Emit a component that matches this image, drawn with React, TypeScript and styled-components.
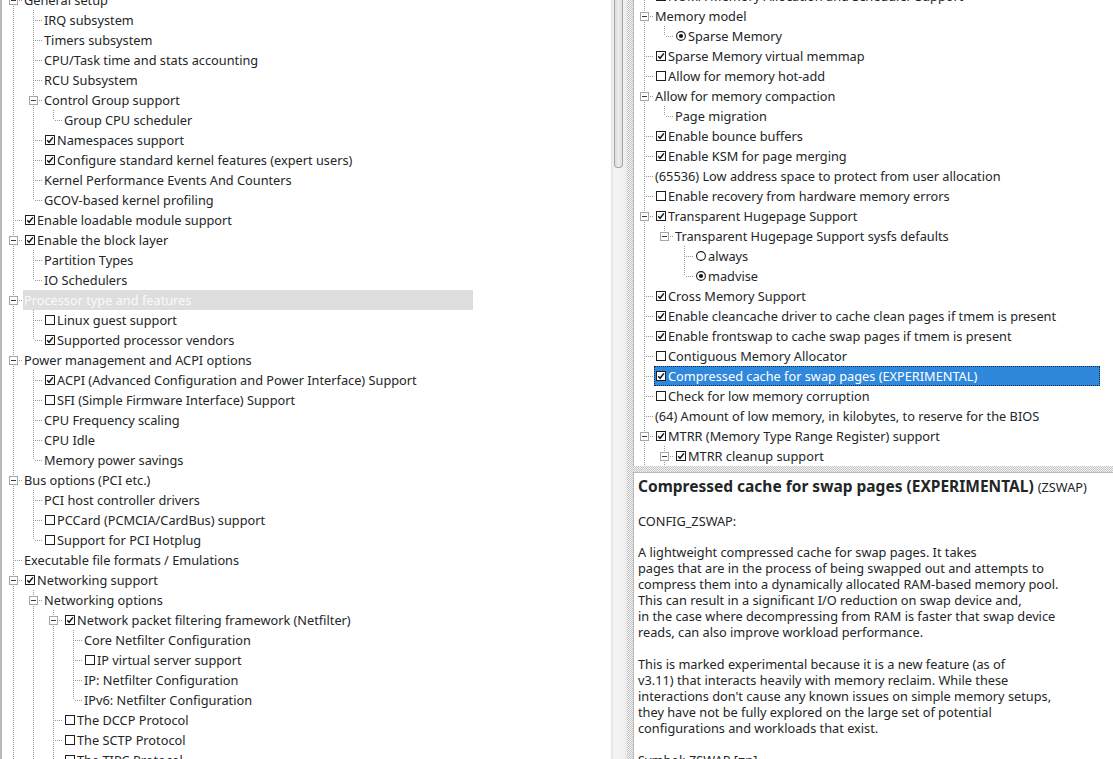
import React from "react";
import styled, { createGlobalStyle, css } from "styled-components";

const GlobalStyle = createGlobalStyle`
  html, body { margin: 0; padding: 0; background: #ffffff; overflow: hidden; }
  body {
    font-family: "Noto Sans", "Open Sans", "DejaVu Sans", sans-serif;
    font-size: 12.75px;
    color: #232627;
  }
`;

type Kind = "menu" | "check" | "radio" | "value";
interface Item {
  d: number;
  kind: Kind;
  text: string;
  on?: boolean;
  open?: boolean;
  sel?: "active" | "inactive";
}

const it = (d: number, kind: Kind, text: string, extra: Partial<Item> = {}): Item => ({ d, kind, text, ...extra });

const leftItems: Item[] = [
  it(0, "menu", "General setup", { open: true }),
  it(1, "menu", "IRQ subsystem"),
  it(1, "menu", "Timers subsystem"),
  it(1, "menu", "CPU/Task time and stats accounting"),
  it(1, "menu", "RCU Subsystem"),
  it(1, "menu", "Control Group support", { open: true }),
  it(2, "menu", "Group CPU scheduler"),
  it(1, "check", "Namespaces support", { on: true }),
  it(1, "check", "Configure standard kernel features (expert users)", { on: true }),
  it(1, "menu", "Kernel Performance Events And Counters"),
  it(1, "menu", "GCOV-based kernel profiling"),
  it(0, "check", "Enable loadable module support", { on: true }),
  it(0, "check", "Enable the block layer", { on: true, open: true }),
  it(1, "menu", "Partition Types"),
  it(1, "menu", "IO Schedulers"),
  it(0, "menu", "Processor type and features", { open: true, sel: "inactive" }),
  it(1, "check", "Linux guest support", { on: false }),
  it(1, "check", "Supported processor vendors", { on: true }),
  it(0, "menu", "Power management and ACPI options", { open: true }),
  it(1, "check", "ACPI (Advanced Configuration and Power Interface) Support", { on: true }),
  it(1, "check", "SFI (Simple Firmware Interface) Support", { on: false }),
  it(1, "menu", "CPU Frequency scaling"),
  it(1, "menu", "CPU Idle"),
  it(1, "menu", "Memory power savings"),
  it(0, "menu", "Bus options (PCI etc.)", { open: true }),
  it(1, "menu", "PCI host controller drivers"),
  it(1, "check", "PCCard (PCMCIA/CardBus) support", { on: false }),
  it(1, "check", "Support for PCI Hotplug", { on: false }),
  it(0, "menu", "Executable file formats / Emulations"),
  it(0, "check", "Networking support", { on: true, open: true }),
  it(1, "menu", "Networking options", { open: true }),
  it(2, "check", "Network packet filtering framework (Netfilter)", { on: true, open: true }),
  it(3, "menu", "Core Netfilter Configuration"),
  it(3, "check", "IP virtual server support", { on: false }),
  it(3, "menu", "IP: Netfilter Configuration"),
  it(3, "menu", "IPv6: Netfilter Configuration"),
  it(2, "check", "The DCCP Protocol", { on: false }),
  it(2, "check", "The SCTP Protocol", { on: false }),
  it(2, "check", "The TIPC Protocol", { on: false }),
  it(2, "check", "The RDS Protocol", { on: false }),
  it(1, "check", "Amateur Radio support", { on: false }),
  it(1, "check", "CAN bus subsystem support", { on: false }),
  it(0, "menu", "Device Drivers"),
  it(0, "menu", "File systems"),
];

const rightItems: Item[] = [
  it(0, "check", "NUMA Memory Allocation and Scheduler Support", { on: true }),
  it(0, "menu", "Memory model", { open: true }),
  it(1, "radio", "Sparse Memory", { on: true }),
  it(0, "check", "Sparse Memory virtual memmap", { on: true }),
  it(0, "check", "Allow for memory hot-add", { on: false }),
  it(0, "menu", "Allow for memory compaction", { open: true }),
  it(1, "menu", "Page migration"),
  it(0, "check", "Enable bounce buffers", { on: true }),
  it(0, "check", "Enable KSM for page merging", { on: true }),
  it(0, "value", "(65536) Low address space to protect from user allocation"),
  it(0, "check", "Enable recovery from hardware memory errors", { on: false }),
  it(0, "check", "Transparent Hugepage Support", { on: true, open: true }),
  it(1, "menu", "Transparent Hugepage Support sysfs defaults", { open: true }),
  it(2, "radio", "always", { on: false }),
  it(2, "radio", "madvise", { on: true }),
  it(0, "check", "Cross Memory Support", { on: true }),
  it(0, "check", "Enable cleancache driver to cache clean pages if tmem is present", { on: true }),
  it(0, "check", "Enable frontswap to cache swap pages if tmem is present", { on: true }),
  it(0, "check", "Contiguous Memory Allocator", { on: false }),
  it(0, "check", "Compressed cache for swap pages (EXPERIMENTAL)", { on: true, sel: "active" }),
  it(0, "check", "Check for low memory corruption", { on: false }),
  it(0, "value", "(64) Amount of low memory, in kilobytes, to reserve for the BIOS"),
  it(0, "check", "MTRR (Memory Type Range Register) support", { on: true, open: true }),
  it(1, "check", "MTRR cleanup support", { on: true, open: true }),
  it(2, "value", "(0) MTRR cleanup enable value (0-1)"),
  it(2, "value", "(1) MTRR cleanup spare reg num (0-7)"),
  it(1, "check", "x86 PAT support", { on: true }),
  it(0, "check", "EFI runtime service support", { on: true }),
];

type Vert = "none" | "full" | "top";
interface Cell { vert: Vert; branch: boolean; expander: boolean; }

function buildCells(items: Item[]): Cell[][] {
  const isLast = items.map((row, i) => {
    for (let j = i + 1; j < items.length; j++) {
      if (items[j].d < row.d) return true;
      if (items[j].d === row.d) return false;
    }
    return false;
  });
  const stack: number[] = [];
  return items.map((row, i) => {
    stack[row.d] = i;
    stack.length = row.d + 1;
    const cells: Cell[] = [];
    for (let k = 0; k < row.d; k++) {
      const anc = stack[k];
      cells.push({ vert: isLast[anc] ? "none" : "full", branch: false, expander: false });
    }
    cells.push({ vert: isLast[i] ? "top" : "full", branch: true, expander: !!row.open });
    return cells;
  });
}

/* ---------- layout ---------- */

const Window = styled.div`
  display: flex;
  width: 1113px;
  height: 759px;
  overflow: hidden;
  background: #ffffff;
`;

const LeftPane = styled.div`
  display: flex;
  width: 627px;
  height: 100%;
  flex-shrink: 0;
`;

const TreeView = styled.div<{ $frame: number; $height?: number }>`
  position: relative;
  flex: 1;
  min-width: 0;
  overflow: hidden;
  background: #ffffff;
  border-left: ${(p) => p.$frame}px solid #b9b9b9;
  ${(p) => p.$height !== undefined && css`flex: none; height: ${p.$height}px;`}
`;

const TreeBody = styled.div<{ $offset: number; $pad: number }>`
  display: flex;
  flex-direction: column;
  margin-top: ${(p) => p.$offset}px;
  padding-left: ${(p) => p.$pad}px;
`;

const ScrollTrack = styled.div`
  width: 16px;
  height: 100%;
  flex-shrink: 0;
  background: linear-gradient(to right, #e2e2e2 0, #f4f4f4 3px, #f1f1f1 70%, #e9e9e9 100%);
  padding-left: 3px;
  box-sizing: border-box;
`;

const ScrollThumb = styled.div`
  width: 9px;
  height: 168px;
  box-sizing: border-box;
  border: 1px solid #a4a4a4;
  border-top: none;
  border-radius: 0 0 4px 4px;
  background: linear-gradient(to right, #dcdcdc, #ececec 50%, #dedede);
`;

const checker = css`
  background-color: #eeeeee;
  background-image: repeating-conic-gradient(#c4c4c4 0 25%, #f2f2f2 0 50%);
  background-size: 2px 2px;
`;

const VSplitter = styled.div`
  width: 6px;
  height: 100%;
  flex-shrink: 0;
  ${checker}
`;

const HSplitter = styled.div`
  height: 6px;
  flex-shrink: 0;
  ${checker}
`;

const RightColumn = styled.div`
  flex: 1;
  display: flex;
  flex-direction: column;
  min-width: 0;
`;

/* ---------- tree rows ---------- */

const Row = styled.div<{ $width: number }>`
  display: flex;
  align-items: center;
  height: 20px;
  width: ${(p) => p.$width}px;
  flex-shrink: 0;
`;

const dotV = "repeating-linear-gradient(to bottom, #9a9a9a 0 1px, transparent 1px 2px)";
const dotH = "repeating-linear-gradient(to right, #9a9a9a 0 1px, transparent 1px 2px)";

const IndentCell = styled.div<{ $vert: Vert; $branch: boolean }>`
  position: relative;
  width: 20px;
  height: 20px;
  flex-shrink: 0;
  &::before {
    content: "";
    display: ${(p) => (p.$vert === "none" ? "none" : "block")};
    position: absolute;
    left: 10px;
    top: 0;
    width: 1px;
    height: ${(p) => (p.$vert === "top" ? "10px" : "20px")};
    background: ${dotV};
  }
  &::after {
    content: "";
    display: ${(p) => (p.$branch ? "block" : "none")};
    position: absolute;
    left: 12px;
    top: 10px;
    width: 8px;
    height: 1px;
    background: ${dotH};
  }
`;

const Expander = styled.span`
  position: absolute;
  z-index: 1;
  left: 6px;
  top: 6px;
  width: 9px;
  height: 9px;
  box-sizing: border-box;
  border: 1px solid #a6a6a6;
  background: #ffffff;
  &::after {
    content: "";
    position: absolute;
    left: 1px;
    top: 3px;
    width: 5px;
    height: 1px;
    background: #3c3c3c;
  }
`;

const ItemArea = styled.div<{ $sel?: "active" | "inactive" }>`
  flex: 1;
  display: flex;
  align-items: center;
  height: 20px;
  min-width: 0;
  padding-left: 1px;
  white-space: nowrap;
  box-sizing: border-box;
  line-height: 20px;
  ${(p) =>
    p.$sel === "inactive" &&
    css`
      background: #dedede;
      color: #fafafa;
    `}
  ${(p) =>
    p.$sel === "active" &&
    css`
      background: #2f88dc;
      color: #ffffff;
      outline: 1px dotted #0d2a4c;
      outline-offset: -1px;
    `}
`;

const Indicator = styled.span`
  display: inline-flex;
  width: 10px;
  height: 10px;
  margin: 0 2px 0 1px;
  flex-shrink: 0;
`;

const Label = styled.span`
  line-height: 20px;
`;

const CheckBox: React.FC<{ on?: boolean }> = ({ on }) => (
  <Indicator>
    <svg width="10" height="10" viewBox="0 0 10 10">
      <rect x="0.5" y="0.5" width="9" height="9" fill="#ffffff" stroke="#1c1c1c" />
      {on && <path d="M2.2 5.2 L4.1 7.3 L7.9 2.4" fill="none" stroke="#111" strokeWidth="1.4" />}
    </svg>
  </Indicator>
);

const Radio: React.FC<{ on?: boolean }> = ({ on }) => (
  <Indicator>
    <svg width="10" height="10" viewBox="0 0 10 10">
      <circle cx="5" cy="5" r="4.4" fill="#ffffff" stroke="#1c1c1c" strokeWidth="1.1" />
      {on && <circle cx="5" cy="5" r="2.1" fill="#111" />}
    </svg>
  </Indicator>
);

const Tree: React.FC<{ items: Item[]; width: number }> = ({ items, width }) => {
  const cells = buildCells(items);
  return (
    <>
      {items.map((row, i) => (
        <Row key={i} $width={width}>
          {cells[i].map((c, k) => (
            <IndentCell key={k} $vert={c.vert} $branch={c.branch}>
              {c.expander && <Expander />}
            </IndentCell>
          ))}
          <ItemArea $sel={row.sel}>
            {row.kind === "check" && <CheckBox on={row.on} />}
            {row.kind === "radio" && <Radio on={row.on} />}
            <Label>{row.text}</Label>
          </ItemArea>
        </Row>
      ))}
    </>
  );
};

/* ---------- help ---------- */

const HelpPane = styled.div`
  flex: 1;
  overflow: hidden;
  border-left: 1px solid #b9b9b9;
  border-top: 1px solid #b9b9b9;
  padding: 3px 4px 0 4px;
  background: #ffffff;
`;

const HelpTitle = styled.div`
  font-size: 15.5px;
  font-weight: 700;
  line-height: 20px;
  white-space: nowrap;
  margin-bottom: 16px;
`;

const HelpSymbol = styled.span`
  font-size: 12.75px;
  font-weight: 400;
`;

const HelpPara = styled.p<{ $gap?: number }>`
  margin: 0 0 ${(p) => p.$gap ?? 16}px 0;
  font-size: 12.75px;
  line-height: 16px;
  white-space: pre;
`;

export default function App() {
  return (
    <>
      <GlobalStyle />
      <Window>
        <LeftPane>
          <TreeView $frame={2}>
            <TreeBody $offset={-10} $pad={1}>
              <Tree items={leftItems} width={470} />
            </TreeBody>
          </TreeView>
          <ScrollTrack>
            <ScrollThumb />
          </ScrollTrack>
        </LeftPane>
        <VSplitter />
        <RightColumn>
          <TreeView $frame={1} $height={466}>
            <TreeBody $offset={-14} $pad={0}>
              <Tree items={rightItems} width={466} />
            </TreeBody>
          </TreeView>
          <HSplitter />
          <HelpPane>
            <HelpTitle>
              Compressed cache for swap pages (EXPERIMENTAL) <HelpSymbol>(ZSWAP)</HelpSymbol>
            </HelpTitle>
            <HelpPara $gap={15}>CONFIG_ZSWAP:</HelpPara>
            <HelpPara>
              {`A lightweight compressed cache for swap pages. It takes
pages that are in the process of being swapped out and attempts to
compress them into a dynamically allocated RAM-based memory pool.
This can result in a significant I/O reduction on swap device and,
in the case where decompressing from RAM is faster that swap device
reads, can also improve workload performance.`}
            </HelpPara>
            <HelpPara>
              {`This is marked experimental because it is a new feature (as of
v3.11) that interacts heavily with memory reclaim. While these
interactions don't cause any known issues on simple memory setups,
they have not be fully explored on the large set of potential
configurations and workloads that exist.`}
            </HelpPara>
            <HelpPara>Symbol: ZSWAP [=n]</HelpPara>
          </HelpPane>
        </RightColumn>
      </Window>
    </>
  );
}
